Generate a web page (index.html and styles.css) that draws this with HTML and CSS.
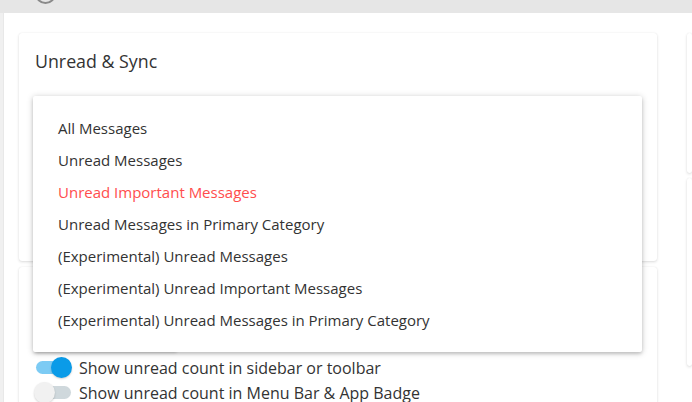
FILE: index.html
```html
<!DOCTYPE html>
<html>
<head>
<meta charset="utf-8">
<link rel="stylesheet" href="styles.css">
</head>
<body>
<div class="topbar"><span class="topbar-icon"></span></div>
<div class="layout">
  <div class="strip"></div>
  <div class="content">
    <div class="col col-main">
      <div class="card card-sync">
        <div class="card-title">Unread &amp; Sync</div>
        <div class="select-box"></div>
        <ul class="menu">
          <li class="menu-item">All Messages</li>
          <li class="menu-item">Unread Messages</li>
          <li class="menu-item active">Unread Important Messages</li>
          <li class="menu-item">Unread Messages in Primary Category</li>
          <li class="menu-item">(Experimental) Unread Messages</li>
          <li class="menu-item">(Experimental) Unread Important Messages</li>
          <li class="menu-item">(Experimental) Unread Messages in Primary Category</li>
        </ul>
      </div>
      <div class="card card-count">
        <div class="select-box small"></div>
        <div class="toggle-list">
          <div class="toggle-row">
            <span class="toggle on"><span class="knob"></span></span>
            <span class="toggle-label">Show unread count in sidebar or toolbar</span>
          </div>
          <div class="toggle-row">
            <span class="toggle"><span class="knob"></span></span>
            <span class="toggle-label">Show unread count in Menu Bar &amp; App Badge</span>
          </div>
        </div>
      </div>
    </div>
    <div class="col col-side">
      <div class="card card-side1"></div>
      <div class="card card-side2"></div>
    </div>
  </div>
</div>
</body>
</html>
```
FILE: styles.css
```css
* { box-sizing: border-box; }
html, body { margin: 0; padding: 0; }
body {
  width: 692px;
  height: 402px;
  overflow: hidden;
  background: #fff;
  font-family: "Open Sans", "Noto Sans", sans-serif;
  color: #333;
}
.topbar {
  height: 13px;
  background: #e6e6e6;
  overflow: hidden;
  padding-left: 35px;
}
.topbar-icon {
  display: block;
  width: 21px;
  height: 21px;
  margin-top: -17px;
  border: 2px solid #8a8a8a;
  border-radius: 50%;
}
.layout {
  display: flex;
  height: 389px;
}
.strip {
  width: 4px;
  flex: none;
  background: #f0f0f0;
  border-right: 1px solid #e8e8e8;
}
.content {
  display: flex;
  gap: 30px;
  padding: 20px 0 0 15px;
  flex: 1;
}
.col { display: flex; flex-direction: column; }
.col-main { width: 638px; flex: none; gap: 6px; }
.col-side { flex: 1; gap: 5px; }
.card {
  background: #fff;
  border-radius: 3px;
  box-shadow: 0 1px 3px rgba(0,0,0,0.14), 0 0 1px rgba(0,0,0,0.08);
  flex: none;
}
.card-sync {
  position: relative;
  height: 228px;
  padding: 16px 16px;
}
.card-title {
  font-size: 17.8px;
  line-height: 24px;
}
.select-box {
  margin-top: 40px;
  height: 56px;
  width: 200px;
  border-radius: 2px;
  box-shadow: 0 1px 3px rgba(0,0,0,0.15);
}
.menu {
  position: absolute;
  left: 14px;
  top: 63px;
  width: 609px;
  margin: 0;
  padding: 16px 0;
  list-style: none;
  background: #fff;
  border-radius: 2px;
  box-shadow: 0 1px 6px rgba(0,0,0,0.22), 0 2px 3px rgba(0,0,0,0.12);
  z-index: 2;
}
.menu-item {
  height: 32px;
  line-height: 32px;
  padding-left: 25px;
  font-size: 15px;
  color: #333;
}
.menu-item.active { color: #ff4d4d; }
.card-count {
  flex: 1 0 auto;
  padding: 33px 16px 0 16px;
}
.select-box.small {
  margin-top: 0;
  width: 142px;
  height: 52px;
}
.toggle-list {
  margin-top: 3px;
  display: flex;
  flex-direction: column;
}
.toggle-row {
  display: flex;
  align-items: center;
  height: 25px;
}
.toggle {
  position: relative;
  width: 35px;
  height: 13px;
  border-radius: 7px;
  background: #cfd8dc;
  margin-right: 8px;
  margin-left: 1px;
  flex: none;
}
.toggle.on { background: #7ccbf4; }
.knob {
  position: absolute;
  top: -4px;
  left: -2px;
  width: 21px;
  height: 21px;
  border-radius: 50%;
  background: #f1f1f1;
  box-shadow: 0 1px 2px rgba(0,0,0,0.18);
}
.toggle.on .knob {
  left: auto;
  right: -1px;
  background: #0a9be8;
}
.toggle-label {
  font-size: 16px;
  color: #333;
}
.card-side1 { height: 140px; }
.card-side2 { height: 188px; }
```
